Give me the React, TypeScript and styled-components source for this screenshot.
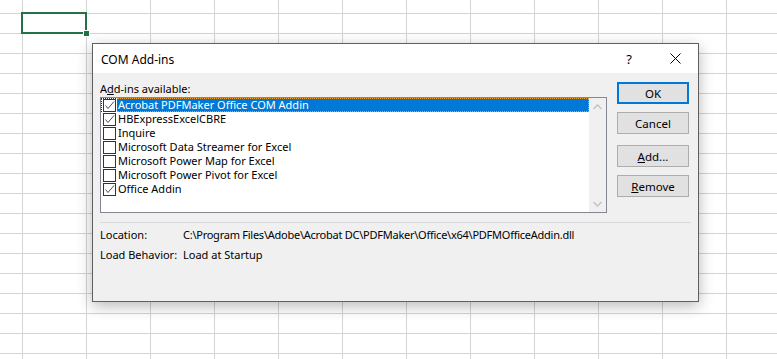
import React from 'react';
import styled, { createGlobalStyle } from 'styled-components';

const GlobalStyle = createGlobalStyle`
  html, body {
    margin: 0;
    padding: 0;
    background: #fff;
  }
  body {
    font-family: 'Segoe UI', 'Noto Sans', 'Liberation Sans', sans-serif;
  }
`;

const Sheet = styled.div`
  position: relative;
  width: 777px;
  height: 359px;
  overflow: hidden;
  background-color: #fff;
  background-image:
    linear-gradient(to right, #d4d4d4 1px, transparent 1px),
    linear-gradient(to bottom, #d4d4d4 1px, transparent 1px);
  background-size: 64px 20px;
  background-position: 22px 13px;
`;

const ActiveCell = styled.div`
  position: absolute;
  left: 21px;
  top: 12px;
  width: 62px;
  height: 18px;
  border: 2px solid #217346;

  &::after {
    content: '';
    position: absolute;
    right: -5px;
    bottom: -5px;
    width: 5px;
    height: 5px;
    background: #217346;
    border: 1px solid #fff;
  }
`;

const Dialog = styled.div`
  position: absolute;
  left: 92px;
  top: 43px;
  width: 605px;
  height: 257px;
  border: 1px solid #5f5f5f;
  background: #f0f0f0;
  box-shadow: 0 4px 14px rgba(0, 0, 0, 0.28);
  display: flex;
  flex-direction: column;
  font-size: 11px;
  color: #000;
`;

const TitleBar = styled.div`
  height: 29px;
  background: #fff;
  display: flex;
  align-items: center;
  padding-left: 8px;
`;

const Title = styled.div`
  flex: 1;
  font-size: 12px;
  padding-top: 1px;
`;

const TitleButton = styled.div`
  width: 46px;
  height: 29px;
  display: flex;
  align-items: center;
  justify-content: center;
  font-size: 13px;
`;

const Body = styled.div`
  flex: 1;
  padding: 9px 7px 0 7px;
  display: flex;
  flex-direction: column;
`;

const TopRow = styled.div`
  display: flex;
  gap: 10px;
`;

const MainColumn = styled.div`
  width: 507px;
  display: flex;
  flex-direction: column;
`;

const FieldLabel = styled.div`
  height: 15px;
  line-height: 13px;

  u {
    text-decoration: underline;
    text-underline-offset: 1px;
  }
`;

const ListBox = styled.div`
  height: 114px;
  border: 1px solid #828790;
  background: #fff;
  display: flex;
`;

const Items = styled.div`
  flex: 1;
  display: flex;
  flex-direction: column;
`;

const Item = styled.div`
  height: 14px;
  display: flex;
  align-items: center;
`;

const CheckCell = styled.div<{ $focus?: boolean }>`
  width: 15px;
  height: 14px;
  box-sizing: border-box;
  display: flex;
  align-items: center;
  justify-content: center;
  border: 1px dotted ${(p) => (p.$focus ? '#333' : 'transparent')};
  border-right: none;
`;

const Box = styled.div`
  width: 11px;
  height: 11px;
  border: 1px solid #333;
  background: #fff;
  display: flex;
  align-items: center;
  justify-content: center;
`;

const ItemText = styled.div<{ $selected?: boolean }>`
  height: 14px;
  line-height: 14px;
  box-sizing: border-box;
  padding-left: 1px;
  white-space: nowrap;
  margin-left: 1px;
  ${(p) =>
    p.$selected
      ? `
    flex: 1;
    background: #0078d7;
    color: #fff;
    border: 1px dotted #f0a030;
    border-left: none;
    line-height: 12px;
  `
      : ''}
`;

const ScrollBar = styled.div`
  width: 17px;
  background: #f0f0f0;
  display: flex;
  flex-direction: column;
  justify-content: space-between;
  align-items: center;
  padding: 6px 0 5px;
  box-sizing: border-box;
`;

const ButtonColumn = styled.div`
  width: 72px;
  display: flex;
  flex-direction: column;
`;

const Button = styled.div<{ $default?: boolean; $gap?: number }>`
  height: 22px;
  box-sizing: border-box;
  margin-top: ${(p) => p.$gap ?? 0}px;
  background: #e1e1e1;
  border: ${(p) => (p.$default ? '2px solid #0078d7' : '1px solid #adadad')};
  display: flex;
  align-items: center;
  justify-content: center;
  font-size: 11.5px;

  u {
    text-decoration: underline;
    text-underline-offset: 1px;
  }
`;

const Separator = styled.div`
  height: 1px;
  background: #d9d9d9;
  margin: 9px 0 0 0;
  width: 591px;
`;

const InfoRow = styled.div<{ $gap: number }>`
  display: flex;
  margin-top: ${(p) => p.$gap}px;
  line-height: 14px;
  white-space: nowrap;
`;

const InfoLabel = styled.div`
  width: 83px;
  flex-shrink: 0;
`;

const PathValue = styled.div`
  letter-spacing: -0.25px;
`;

const Check = () => (
  <svg width="11" height="11" viewBox="0 0 11 11">
    <polyline points="1.5,5.5 4,8.5 10,1.5" fill="none" stroke="#4d4d4d" strokeWidth="1" />
  </svg>
);

const ArrowUp = () => (
  <svg width="9" height="6" viewBox="0 0 9 6">
    <polyline points="0.5,5 4.5,1 8.5,5" fill="none" stroke="#c2c2c2" strokeWidth="1.3" />
  </svg>
);

const ArrowDown = () => (
  <svg width="9" height="6" viewBox="0 0 9 6">
    <polyline points="0.5,1 4.5,5 8.5,1" fill="none" stroke="#c2c2c2" strokeWidth="1.3" />
  </svg>
);

const addins = [
  { name: 'Acrobat PDFMaker Office COM Addin', checked: true },
  { name: 'HBExpressExcelCBRE', checked: true },
  { name: 'Inquire', checked: false },
  { name: 'Microsoft Data Streamer for Excel', checked: false },
  { name: 'Microsoft Power Map for Excel', checked: false },
  { name: 'Microsoft Power Pivot for Excel', checked: false },
  { name: 'Office Addin', checked: true },
];

const App = () => {
  return (
    <Sheet>
      <GlobalStyle />
      <ActiveCell />
      <Dialog>
        <TitleBar>
          <Title>COM Add-ins</Title>
          <TitleButton>?</TitleButton>
          <TitleButton>
            <svg width="11" height="11" viewBox="0 0 11 11">
              <path d="M0.5 0.5 L10.5 10.5 M10.5 0.5 L0.5 10.5" stroke="#000" strokeWidth="1" />
            </svg>
          </TitleButton>
        </TitleBar>
        <Body>
          <TopRow>
            <MainColumn>
              <FieldLabel>
                A<u>d</u>d-ins available:
              </FieldLabel>
              <ListBox>
                <Items>
                  {addins.map((a, i) => (
                    <Item key={a.name}>
                      <CheckCell $focus={i === 0}>
                        <Box>{a.checked && <Check />}</Box>
                      </CheckCell>
                      <ItemText $selected={i === 0}>{a.name}</ItemText>
                    </Item>
                  ))}
                </Items>
                <ScrollBar>
                  <ArrowUp />
                  <ArrowDown />
                </ScrollBar>
              </ListBox>
            </MainColumn>
            <ButtonColumn>
              <Button $default>OK</Button>
              <Button $gap={8}>Cancel</Button>
              <Button $gap={11}>
                <u>A</u>dd...
              </Button>
              <Button $gap={8}>
                <u>R</u>emove
              </Button>
            </ButtonColumn>
          </TopRow>
          <Separator />
          <InfoRow $gap={5}>
            <InfoLabel>Location:</InfoLabel>
            <PathValue>C:\Program Files\Adobe\Acrobat DC\PDFMaker\Office\x64\PDFMOfficeAddin.dll</PathValue>
          </InfoRow>
          <InfoRow $gap={6}>
            <InfoLabel>Load Behavior:</InfoLabel>
            <div>Load at Startup</div>
          </InfoRow>
        </Body>
      </Dialog>
    </Sheet>
  );
};

export default App;
